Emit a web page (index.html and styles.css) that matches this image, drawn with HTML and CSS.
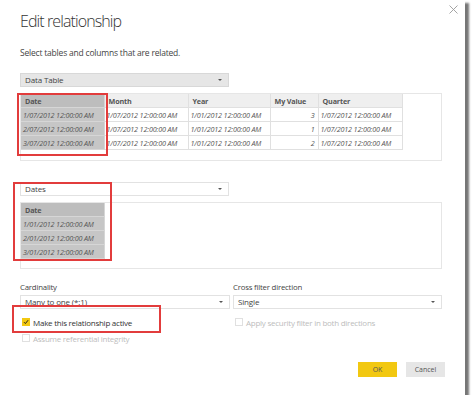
FILE: index.html
```html
<!DOCTYPE html>
<html lang="en">
  <head>
    <meta charset="UTF-8" />
    <title>Edit relationship</title>
    <link rel="stylesheet" href="styles.css">
  </head>
  <body>
    <div class="dialog">
      <div class="header">
        <h1 class="title">Edit relationship</h1>
        <span class="close">
          <svg width="9" height="9" viewBox="0 0 9 9"><path d="M0.5 0.5 L8.5 8.5 M8.5 0.5 L0.5 8.5" stroke="#9a9a9a" stroke-width="0.9" fill="none"/></svg>
        </span>
      </div>
      <p class="subtitle">Select tables and columns that are related.</p>

      <div class="select select-grey">Data Table <span class="caret"></span></div>
      <div class="preview preview-one">
        <table class="grid grid-wide">
          <colgroup>
            <col class="c-date"><col class="c-month"><col class="c-year"><col class="c-value"><col class="c-quarter">
          </colgroup>
          <tr>
            <th class="key">Date</th><th>Month</th><th>Year</th><th>My Value</th><th>Quarter</th>
          </tr>
          <tr>
            <td class="key">1/07/2012 12:00:00 AM</td><td>1/07/2012 12:00:00 AM</td><td>1/01/2012 12:00:00 AM</td><td class="num">3</td><td>1/07/2012 12:00:00 AM</td>
          </tr>
          <tr>
            <td class="key">2/07/2012 12:00:00 AM</td><td>1/07/2012 12:00:00 AM</td><td>1/01/2012 12:00:00 AM</td><td class="num">1</td><td>1/07/2012 12:00:00 AM</td>
          </tr>
          <tr>
            <td class="key">3/07/2012 12:00:00 AM</td><td>1/07/2012 12:00:00 AM</td><td>1/01/2012 12:00:00 AM</td><td class="num">2</td><td>1/07/2012 12:00:00 AM</td>
          </tr>
        </table>
      </div>

      <div class="select select-white select-dates">Dates <span class="caret"></span></div>
      <div class="preview preview-two">
        <table class="grid grid-single">
          <colgroup><col class="c-date"></colgroup>
          <tr><th class="key">Date</th></tr>
          <tr><td class="key">1/01/2012 12:00:00 AM</td></tr>
          <tr><td class="key">2/01/2012 12:00:00 AM</td></tr>
          <tr><td class="key">3/01/2012 12:00:00 AM</td></tr>
        </table>
      </div>

      <div class="options">
        <div class="field">
          <label>Cardinality</label>
          <div class="select select-white">Many to one (*:1) <span class="caret"></span></div>
        </div>
        <div class="field">
          <label>Cross filter direction</label>
          <div class="select select-white">Single <span class="caret"></span></div>
        </div>
        <div class="check check-first">
          <span class="box box-on">
            <svg width="8" height="8" viewBox="0 0 8 8"><path d="M1.3 4.2 L3.2 6.1 L6.8 1.6" stroke="#222" stroke-width="1.3" fill="none"/></svg>
          </span>
          Make this relationship active
        </div>
        <div class="check check-first check-off"><span class="box"></span>Apply security filter in both directions</div>
        <div class="check check-off"><span class="box"></span>Assume referential integrity</div>
      </div>

      <div class="footer">
        <button class="btn btn-ok">OK</button>
        <button class="btn btn-cancel">Cancel</button>
      </div>

      <!-- annotation boxes -->
      <div class="mark mark-one"></div>
      <div class="mark mark-two"></div>
      <div class="mark mark-three"></div>
    </div>
  </body>
</html>
```

FILE: styles.css
```css
body {
  margin: 0;
  background: #fff;
  font-family: "Open Sans", "Noto Sans", sans-serif;
  color: #333;
}
.dialog {
  position: relative;
  width: 465px;
  height: 395px;
  box-sizing: border-box;
  padding: 0 20px;
  background: #fff;
  box-shadow: 4px 3px 2px #767676;
}
.header {
  display: flex;
  justify-content: space-between;
  align-items: flex-start;
  height: 40px;
}
.title {
  margin: 10px 0 0;
  font-size: 16px;
  font-weight: 300;
  letter-spacing: -0.9px;
  line-height: 22px;
  color: #333;
}
.close {
  margin: 5px -13px 0 0;
  line-height: 0;
}
.subtitle {
  margin: 7px 0 0;
  font-size: 8.5px;
  letter-spacing: -0.2px;
  line-height: 12px;
  color: #444;
}
.select {
  position: relative;
  box-sizing: border-box;
  width: 209px;
  height: 14px;
  padding-left: 4px;
  font-size: 8px;
  letter-spacing: -0.15px;
  line-height: 12px;
  color: #444;
  border: 1px solid #e2e2e2;
}
.select-grey {
  margin-top: 14px;
  background: #e6e6e6;
  border-color: #d8d8d8;
}
.select-white {
  background: #fff;
}
.select-dates {
  margin-top: 21px;
}
.caret {
  position: absolute;
  right: 6px;
  top: 5px;
  border-left: 2px solid transparent;
  border-right: 2px solid transparent;
  border-top: 2.5px solid #555;
}
.preview {
  box-sizing: border-box;
  width: 422px;
  border: 1px solid #e6e6e6;
}
.preview-one {
  margin-top: 6px;
  height: 68px;
}
.preview-two {
  margin-top: 6px;
  height: 67px;
}
.grid {
  border-collapse: collapse;
  table-layout: fixed;
  font-size: 7.2px;
  letter-spacing: -0.15px;
  color: #555;
}
.grid-wide {
  width: 381px;
}
.grid-single {
  width: 83px;
}
.c-date { width: 83px; }
.c-month { width: 84px; }
.c-year { width: 82px; }
.c-value { width: 48px; }
.c-quarter { width: 84px; }
.grid th {
  height: 13px;
  padding: 0 4px;
  text-align: left;
  font-weight: 700;
  white-space: nowrap;
  background: #efefef;
  border: 1px solid #e0e0e0;
  border-top: none;
}
.grid td {
  height: 13px;
  padding: 0 2px;
  font-style: italic;
  white-space: nowrap;
  overflow: hidden;
  border: 1px solid #e0e0e0;
}
.grid th:first-child,
.grid td:first-child {
  border-left: none;
}
.grid .key {
  background: #c6c6c6;
  border-color: #d6d6d6;
}
.grid th.key {
  background: #bdbdbd;
}
.grid .num {
  text-align: right;
  padding-right: 3px;
}
.options {
  display: grid;
  grid-template-columns: 210px 209px;
  column-gap: 3px;
  margin-top: 12px;
}
.field label {
  display: block;
  font-size: 7.8px;
  letter-spacing: -0.2px;
  line-height: 13px;
  color: #444;
}
.field .select {
  width: 100%;
  margin-top: 1px;
}
.check {
  display: flex;
  align-items: center;
  height: 16px;
  padding-left: 2px;
  font-size: 8px;
  letter-spacing: -0.25px;
  color: #333;
}
.check-first {
  margin-top: 5px;
}
.check-off {
  color: #bdbdbd;
}
.box {
  display: inline-flex;
  align-items: center;
  justify-content: center;
  box-sizing: border-box;
  width: 8px;
  height: 8px;
  margin-right: 3px;
  border: 1px solid #e0e0e0;
  background: #fff;
}
.box-on {
  background: #f2c811;
  border-color: #f2c811;
}
.footer {
  display: flex;
  justify-content: flex-end;
  gap: 9px;
  margin-top: 16px;
}
.btn {
  width: 39px;
  height: 15px;
  padding: 0;
  border: none;
  font-family: inherit;
  font-size: 7px;
  color: #555;
}
.btn-ok {
  background: #f2c811;
}
.btn-cancel {
  background: #e6e6e6;
}
.mark {
  position: absolute;
  box-sizing: border-box;
  border: 2px solid #e23c3c;
}
.mark-one {
  left: 17px;
  top: 93px;
  width: 91px;
  height: 63px;
}
.mark-two {
  left: 13px;
  top: 182px;
  width: 99px;
  height: 79px;
}
.mark-three {
  left: 12px;
  top: 305px;
  width: 149px;
  height: 28px;
}
```
